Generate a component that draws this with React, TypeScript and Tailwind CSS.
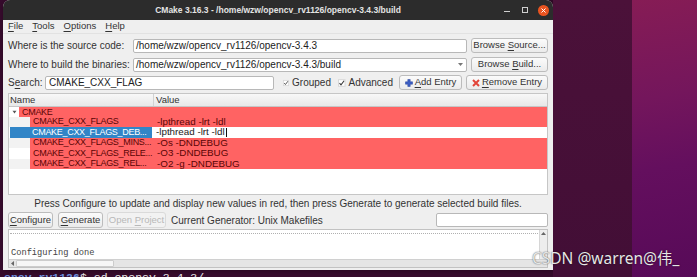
import React from "react";

function U({ children }: { children: React.ReactNode }) {
  return <span className="underline decoration-[0.5px] underline-offset-[1.5px]">{children}</span>;
}

function Btn({ children, className }: { children: React.ReactNode; className: string }) {
  return (
    <div
      className={
        "flex items-center justify-center rounded-[3px] border border-[#bcbcbc] bg-gradient-to-b from-[#fbfbfb] to-[#ebebeb] text-[9.5px] text-[#333] whitespace-nowrap " +
        className
      }
    >
      {children}
    </div>
  );
}

function Check({ label, className }: { label: string; className: string }) {
  return (
    <div className={"flex items-center gap-[3px] text-[10px] text-[#333] " + className}>
      <svg width="8" height="8" viewBox="0 0 8 8">
        <rect x="0.5" y="0.5" width="7" height="7" fill="#fff" stroke="#d6d6d6" />
        <path d="M1.6 4.1 L3.2 6 L6.5 1.6" fill="none" stroke="#3a3a3a" strokeWidth="1.1" />
      </svg>
      <span>{label}</span>
    </div>
  );
}

type Row = {
  name: string;
  value: string;
  alt: boolean;
  h: string;
};

const rows: Row[] = [
  { name: "CMAKE_CXX_FLAGS", value: "-lpthread -lrt -ldl", alt: true, h: "h-[10px]" },
  { name: "CMAKE_CXX_FLAGS_DEB...", value: "-lpthread -lrt -ldl", alt: false, h: "h-[11px]" },
  { name: "CMAKE_CXX_FLAGS_MINS...", value: "-Os -DNDEBUG", alt: true, h: "h-[10px]" },
  { name: "CMAKE_CXX_FLAGS_RELE...", value: "-O3 -DNDEBUG", alt: false, h: "h-[11px]" },
  { name: "CMAKE_CXX_FLAGS_REL...", value: "-O2 -g -DNDEBUG", alt: true, h: "h-[10px]" },
];

function Table() {
  return (
    <div className="mt-[3px] h-[102px] shrink-0 border border-[#c6c6c6] bg-white flex flex-col overflow-hidden">
      <div className="flex h-[13px] shrink-0 items-center border-b border-[#c6c6c6] bg-gradient-to-b from-[#f8f8f8] to-[#e8e8e8] text-[9.5px] text-[#333]">
        <div className="w-[145px] h-full flex items-center pl-[1px] border-r border-[#d2d2d2]">Name</div>
        <div className="pl-[2px]">Value</div>
      </div>
      <div className="flex h-[10px] text-[9px] tracking-[-0.3px] leading-[10px]">
        <div className="w-[10px] flex items-center justify-center bg-white">
          <svg width="5" height="4" viewBox="0 0 5 4">
            <path d="M0.5 0.8 L4.5 0.8 L2.5 3.4 Z" fill="#555" />
          </svg>
        </div>
        <div className="flex-1 bg-[#ff6363] pl-[3px] text-[#5a0505]">CMAKE</div>
      </div>
      {rows.map((r, i) =>
        i === 1 ? (
          <div key={i} className={"flex items-center " + r.h}>
            <div className="w-[1px] h-full bg-white" />
            <div className="w-[142px] h-full flex items-center bg-[#3185c7] pl-[22px] text-white text-[9px] tracking-[-0.3px] whitespace-nowrap overflow-hidden">
              {r.name}
            </div>
            <div className="w-[2px] h-full bg-white" />
            <div className="flex-1 h-full flex items-center bg-white pl-[2px] text-[#222] text-[9.8px] whitespace-nowrap">
              {r.value}
              <span className="ml-[1px] inline-block w-[1px] h-[9px] bg-[#111]" />
            </div>
          </div>
        ) : (
          <div key={i} className={"flex items-center " + r.h}>
            <div className={"w-[21px] h-full " + (r.alt ? "bg-[#f2f2f2]" : "bg-white")} />
            <div className="w-[124px] h-full flex items-center bg-[#ff6363] pl-[3px] text-[#5a0505] text-[9px] tracking-[-0.3px] whitespace-nowrap overflow-hidden">
              {r.name}
            </div>
            <div className="flex-1 h-full flex items-center bg-[#ff6363] pl-[3px] text-[#5a0505] text-[9.8px] whitespace-nowrap">
              {r.value}
            </div>
          </div>
        )
      )}
    </div>
  );
}

function Window() {
  return (
    <div className="w-[550px] h-[270px] flex flex-col bg-[#efefef] rounded-t-[7px] overflow-hidden shadow-[2px_0_6px_rgba(0,0,0,0.45)] text-[#333]">
      {/* title bar */}
      <div className="flex h-[20px] shrink-0 items-center bg-[#2c2c2c]">
        <div className="w-[56px]" />
        <div className="flex-1 text-center text-[8.5px] font-bold text-[#e4e4e4] whitespace-nowrap">
          CMake 3.16.3 - /home/wzw/opencv_rv1126/opencv-3.4.3/build
        </div>
        <div className="w-[56px] flex items-center pl-[7px]">
          <div className="w-[6px] h-[1px] bg-[#cfcfcf] mt-[2px]" />
          <div className="ml-[12px] w-[6px] h-[6px] border border-[#cfcfcf]" />
          <div className="ml-[10px] w-[11px] h-[11px] rounded-full bg-[#e95420] flex items-center justify-center">
            <svg width="5" height="5" viewBox="0 0 5 5">
              <path d="M0.5 0.5 L4.5 4.5 M4.5 0.5 L0.5 4.5" stroke="#fff" strokeWidth="1" />
            </svg>
          </div>
        </div>
      </div>
      {/* menu bar */}
      <div className="flex h-[13px] shrink-0 items-center gap-[9px] pl-[5px] text-[9.5px] text-[#333]">
        <span><U>F</U>ile</span>
        <span><U>T</U>ools</span>
        <span><U>O</U>ptions</span>
        <span><U>H</U>elp</span>
      </div>
      <div className="h-[1px] shrink-0 bg-[#e2e2e2]" />
      <div className="flex flex-col px-[5px] flex-1">
        {/* row 1 */}
        <div className="mt-[4px] flex h-[15px] shrink-0 items-center">
          <div className="w-[125px] text-[10px] whitespace-nowrap">Where is the source code:</div>
          <div className="w-[334px] h-[14px] flex items-center bg-white border border-[#b8b8b8] rounded-[2px] pl-[2px] text-[10px] text-[#222]">
            /home/wzw/opencv_rv1126/opencv-3.4.3
          </div>
          <Btn className="ml-[4px] w-[77px] h-[15px]">
            <span>Browse <U>S</U>ource...</span>
          </Btn>
        </div>
        {/* row 2 */}
        <div className="mt-[4px] flex h-[15px] shrink-0 items-center">
          <div className="w-[125px] text-[10px] whitespace-nowrap">Where to build the binaries:</div>
          <div className="w-[334px] h-[14px] flex items-center justify-between bg-white border border-[#b8b8b8] rounded-[2px] pl-[2px] pr-[3px] text-[10px] text-[#222]">
            <span>/home/wzw/opencv_rv1126/opencv-3.4.3/build</span>
            <svg width="5" height="3" viewBox="0 0 5 3">
              <path d="M0 0 L5 0 L2.5 3 Z" fill="#777" />
            </svg>
          </div>
          <Btn className="ml-[4px] w-[77px] h-[15px]">
            <span>Browse <U>B</U>uild...</span>
          </Btn>
        </div>
        {/* row 3 */}
        <div className="mt-[3px] flex h-[15px] shrink-0 items-center">
          <div className="w-[37px] text-[10px] whitespace-nowrap">
            S<U>e</U>arch:
          </div>
          <div className="w-[229px] h-[14px] flex items-center bg-white border border-[#b8b8b8] rounded-[2px] pl-[3px] text-[10px] text-[#222]">
            CMAKE_CXX_FLAG
          </div>
          <Check label="Grouped" className="ml-[9px] w-[48px]" />
          <Check label="Advanced" className="ml-[7px] w-[55px]" />
          <Btn className="ml-[6px] w-[63px] h-[15px] gap-[2px]">
            <svg width="8" height="8" viewBox="0 0 8 8">
              <path d="M2.8 0.5 H5.2 V2.8 H7.5 V5.2 H5.2 V7.5 H2.8 V5.2 H0.5 V2.8 H2.8 Z" fill="#3d5fc4" stroke="#24409a" strokeWidth="0.5" />
            </svg>
            <span><U>A</U>dd Entry</span>
          </Btn>
          <Btn className="ml-[4px] w-[82px] h-[15px] gap-[2px]">
            <svg width="8" height="8" viewBox="0 0 8 8">
              <path d="M1 1 L7 7 M7 1 L1 7" stroke="#e2453a" strokeWidth="2" />
            </svg>
            <span><U>R</U>emove Entry</span>
          </Btn>
        </div>
        <Table />
        {/* message */}
        <div className="h-[16px] shrink-0 flex items-center justify-center text-[10px] text-[#333] whitespace-nowrap">
          Press Configure to update and display new values in red, then press Generate to generate selected build files.
        </div>
        {/* buttons row */}
        <div className="mt-[1px] flex h-[16px] shrink-0 items-center">
          <Btn className="w-[45px] h-[16px]">
            <span><U>C</U>onfigure</span>
          </Btn>
          <Btn className="ml-[5px] w-[45px] h-[16px]">
            <span><U>G</U>enerate</span>
          </Btn>
          <div className="ml-[4px] w-[59px] h-[16px] flex items-center justify-center rounded-[3px] border border-[#dadada] bg-[#f2f2f2] text-[9.5px] text-[#b8b8b8] whitespace-nowrap">
            <span>Open <U>P</U>roject</span>
          </div>
          <div className="ml-[5px] text-[10px] whitespace-nowrap">Current Generator: Unix Makefiles</div>
          <div className="ml-auto w-[112px] h-[14px] bg-white border border-[#b8b8b8] rounded-[2px]" />
        </div>
        {/* output */}
        <div className="mt-[1px] h-[39px] shrink-0 flex flex-col border border-[#c2c2c2] bg-white">
          <div className="flex flex-1">
            <div className="flex-1 flex flex-col">
              <div className="mx-[1px] mt-[3px] border-t border-dotted border-[#b0b0b0]" />
              <div className="flex-1 flex items-end pl-[2px] pb-[1px] font-['Liberation_Mono',monospace] text-[8.7px] text-[#444] leading-[10px]">
                Configuring done
              </div>
            </div>
            <div className="w-[8px] bg-[#ededed] border-l border-[#d6d6d6] flex justify-center pt-[2px]">
              <svg width="5" height="3" viewBox="0 0 5 3">
                <path d="M0 3 L5 3 L2.5 0 Z" fill="#666" />
              </svg>
            </div>
          </div>
          <div className="h-[8px] flex items-stretch bg-[#e5e5e5] border-t border-[#d0d0d0]">
            <div className="w-[7px] flex items-center justify-center">
              <svg width="3" height="5" viewBox="0 0 3 5">
                <path d="M3 0 L3 5 L0 2.5 Z" fill="#666" />
              </svg>
            </div>
            <div className="w-[98px] bg-[#f6f6f6] border border-[#cccccc] rounded-[1px]" />
          </div>
        </div>
      </div>
    </div>
  );
}

export default function App() {
  return (
    <div className="relative flex w-[697px] h-[277px] overflow-hidden font-['Liberation_Sans',Arial,sans-serif]">
      <div className="flex flex-col w-[553px] bg-[#370b2d]">
        <div className="flex h-[270px] shrink-0">
          <div className="w-[3px]" />
          <Window />
        </div>
        <div className="h-[7px] overflow-hidden pl-[4px] font-['Liberation_Mono',monospace] text-[11.5px] leading-[14px] whitespace-nowrap">
          <div className="mt-[1px]">
            <span className="text-[#6f8fdc] font-bold">encv_rv1126</span>
            <span className="text-[#e8e8e8]">$ cd opencv-3.4.3/</span>
          </div>
        </div>
      </div>
      <div className="w-[79px] bg-gradient-to-b from-[#4b1139] to-[#420e36]" />
      <div className="flex-1 bg-[linear-gradient(170deg,#861c55_0%,#74165c_35%,#640f5e_60%,#570a58_100%)]" />
      <div className="absolute left-[532px] top-[250px] text-[15.5px] leading-[16px] text-[#e6e6e6] whitespace-nowrap font-['Noto_Sans',Arial,'Noto_Sans_CJK_SC',sans-serif] [text-shadow:0_0_1.5px_rgba(0,0,0,0.75)]">
        CSDN @warren@伟_
      </div>
    </div>
  );
}
